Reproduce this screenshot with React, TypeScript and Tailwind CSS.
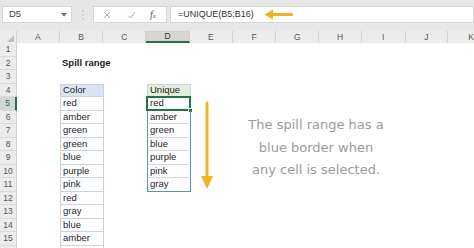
import React from 'react';

const letters = ['A', 'B', 'C', 'D', 'E', 'F', 'G', 'H', 'I', 'J'];
const colWidths = ['w-[43px]', 'w-[44px]', 'w-[43px]', 'w-[44px]', 'w-[43px]', 'w-[44px]', 'w-[43px]', 'w-[43px]', 'w-[44px]', 'w-[43px]'];
const rows = Array.from({ length: 16 }, (_, i) => i + 1);

const colorCol: Record<number, string> = {
  4: 'Color', 5: 'red', 6: 'amber', 7: 'green', 8: 'green', 9: 'blue', 10: 'purple',
  11: 'pink', 12: 'red', 13: 'gray', 14: 'blue', 15: 'amber', 16: '',
};
const uniqueCol: Record<number, string> = {
  4: 'Unique', 5: 'red', 6: 'amber', 7: 'green', 8: 'blue', 9: 'purple', 10: 'pink', 11: 'gray',
};

const font = { fontFamily: '"Liberation Sans", Arial, sans-serif' };

const Cell: React.FC<{ row: number; col: number }> = ({ row, col }) => {
  const w = colWidths[col];
  if (col === 1 && row === 2) {
    return (
      <div className={`${w} h-full flex items-center pl-[2px] whitespace-nowrap overflow-visible text-[9.5px] font-bold text-[#1e1e1e]`}>
        Spill range
      </div>
    );
  }
  if (col === 1 && row in colorCol) {
    const head = row === 4;
    return (
      <div className={`${w} h-full flex items-center pl-[2px] text-[9.5px] text-[#1e1e1e] border-x border-b border-[#c9d2df] ${head ? 'border-t bg-[#dae3f1]' : 'bg-white'}`}>
        {colorCol[row]}
      </div>
    );
  }
  if (col === 3 && uniqueCol[row]) {
    if (row === 4) {
      return (
        <div className={`${w} h-full flex items-center pl-[2px] text-[9.5px] text-[#1e1e1e] border border-[#c9d2df] bg-[#e2efda]`}>
          Unique
        </div>
      );
    }
    return (
      <div className={`${w} h-full relative flex items-center pl-[2px] text-[9.5px] text-[#1e1e1e] border-x border-b border-x-[#5f8ccc] ${row === 11 ? 'border-b-[#5f8ccc]' : 'border-b-[#d3d9e3]'}`}>
        {uniqueCol[row]}
        {row === 5 && (
          <>
            <div className="absolute -left-[2px] -top-[1px] -right-[1px] -bottom-[1px] border-2 border-[#217346]" />
            <div className="absolute -right-[3px] -bottom-[3px] w-[5px] h-[5px] bg-[#217346] border border-white" />
          </>
        )}
      </div>
    );
  }
  return <div className={`${w} h-full`} />;
};

export default function App() {
  return (
    <div className="relative w-[474px] h-[248px] overflow-hidden bg-white" style={font}>
      {/* formula bar */}
      <div className="h-[31px] bg-[#e7e7e7] flex items-start pt-[6px] pl-[2px]">
        <div className="w-[70px] h-[17px] bg-white border border-[#d6d6d6] flex items-center justify-between pl-[6px] pr-[4px]">
          <span className="text-[9.5px] text-[#444]">D5</span>
          <svg width="6" height="4" viewBox="0 0 6 4"><path d="M0 0h6L3 3.5z" fill="#6b6b6b" /></svg>
        </div>
        <div className="w-[21px] h-[17px] flex items-center justify-center">
          <svg width="2" height="10" viewBox="0 0 2 10">
            <rect x="0.5" y="0" width="1" height="1.5" fill="#b5b5b5" />
            <rect x="0.5" y="4" width="1" height="1.5" fill="#b5b5b5" />
            <rect x="0.5" y="8" width="1" height="1.5" fill="#b5b5b5" />
          </svg>
        </div>
        <div className="w-[74px] h-[17px] bg-white border border-[#d6d6d6] flex items-center pl-[9px]">
          <svg width="8" height="8" viewBox="0 0 8 8"><path d="M1 1l6 6M7 1L1 7" stroke="#a9a9a9" strokeWidth="1" /></svg>
          <svg className="ml-[16px]" width="9" height="8" viewBox="0 0 9 8"><path d="M1 4.5l2.5 2.5L8 1" stroke="#a9a9a9" strokeWidth="1" fill="none" /></svg>
          <span className="ml-[14px] text-[10px] italic text-[#555]" style={{ fontFamily: '"Liberation Serif", serif' }}>
            f<span className="text-[7px]">x</span>
          </span>
        </div>
        <div className="ml-[3px] flex-1 h-[17px] bg-white border border-[#d6d6d6] flex items-center pl-[7px]">
          <span className="text-[9px] text-[#333] whitespace-nowrap">=UNIQUE(B5:B16)</span>
          <svg className="ml-[10px]" width="29" height="11" viewBox="0 0 29 11">
            <path d="M7 5.5h21" stroke="#f1b324" strokeWidth="3" strokeLinecap="round" />
            <path d="M0.5 5.5L9 0.5v10z" fill="#f1b324" />
          </svg>
        </div>
      </div>

      {/* column headers */}
      <div className="flex h-[12px] bg-[#ececec] text-[8.5px] text-[#555]">
        <div className="w-[17px] h-full border-r border-[#d2d2d2] relative">
          <svg className="absolute right-[2px] bottom-[1px]" width="7" height="7" viewBox="0 0 7 7"><path d="M7 0v7H0z" fill="#bdbdbd" /></svg>
        </div>
        {letters.map((l, i) => (
          <div
            key={l}
            className={`${colWidths[i]} h-full flex items-center justify-center border-r border-[#d2d2d2] ${l === 'D' ? 'bg-[#d5d5d5] border-b-2 border-b-[#217346] text-[#333]' : ''}`}
          >
            {l}
          </div>
        ))}
        <div className="flex-1 h-full flex items-center pl-[20px]">K</div>
      </div>

      {/* sheet rows */}
      {rows.map((r) => (
        <div key={r} className={`flex ${r % 2 === 1 ? 'h-[14px]' : 'h-[13px]'}`}>
          <div
            className={`w-[17px] h-full flex items-center justify-center text-[8.5px] border-b border-[#dadada] ${r === 5 ? 'bg-[#d5d5d5] border-r-2 border-r-[#217346] text-[#217346]' : 'bg-[#ececec] border-r border-r-[#d2d2d2] text-[#555]'}`}
          >
            {r < 16 ? r : ''}
          </div>
          {letters.map((_, c) => (
            <Cell key={c} row={r} col={c} />
          ))}
          <div className="flex-1" />
        </div>
      ))}

      {/* annotation arrow */}
      <svg className="absolute left-[200px] top-[100px]" width="14" height="90" viewBox="0 0 14 90">
        <path d="M7 3v74" stroke="#f1b324" strokeWidth="3" strokeLinecap="round" />
        <path d="M1 76h12l-6 13z" fill="#f1b324" />
      </svg>

      {/* annotation text */}
      <div
        className="absolute left-[216px] top-[114px] w-[200px] text-center text-[13px] leading-[22.5px] text-[#9a9a9a]"
        style={{ fontFamily: '"DejaVu Sans", sans-serif' }}
      >
        The spill range has a<br />blue border when<br />any cell is selected.
      </div>
    </div>
  );
}
